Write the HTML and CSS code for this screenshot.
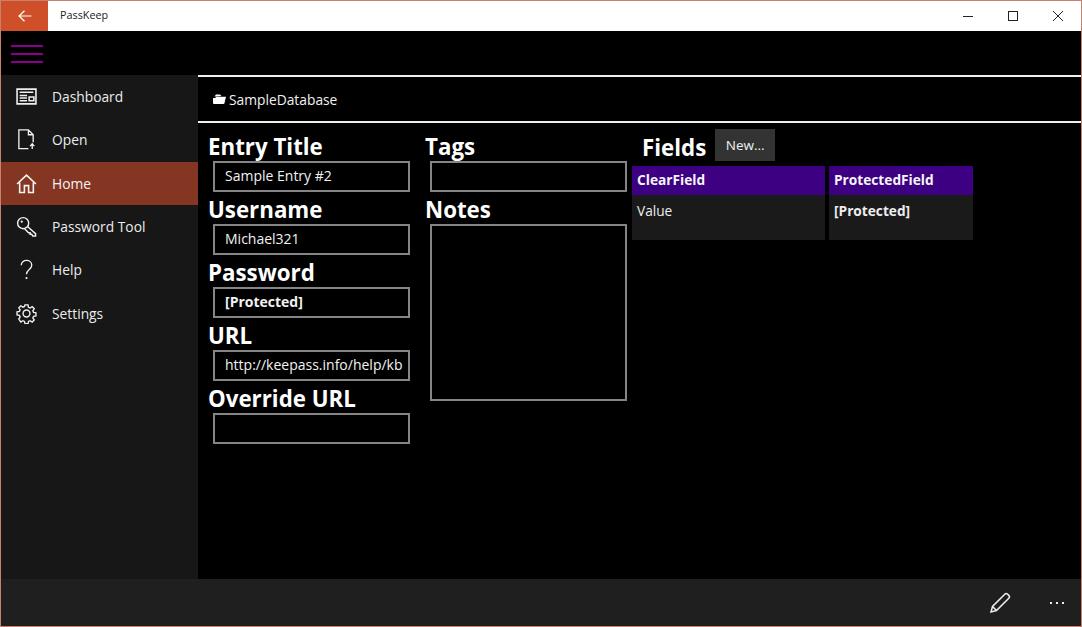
FILE: index.html
```html
<!DOCTYPE html>
<html lang="en">
<head>
<meta charset="utf-8">
<title>PassKeep</title>
<link rel="stylesheet" href="styles.css">
</head>
<body>
<div class="window">
  <header class="titlebar">
    <div class="back"><svg width="14" height="12" viewBox="0 0 14 12"><path d="M6.500.7 1 6l5.500 5.300M1 6h12.500" fill="none" stroke="#fff" stroke-width="1.200"/></svg></div>
    <div class="app-name">PassKeep</div>
    <div class="controls">
      <svg width="12" height="12" viewBox="0 0 12 12"><path d="M1 6.500h10" stroke="#222" stroke-width="1"/></svg>
      <svg width="12" height="12" viewBox="0 0 12 12"><rect x="1.500" y="1.500" width="9" height="9" fill="none" stroke="#222" stroke-width="1"/></svg>
      <svg width="12" height="12" viewBox="0 0 12 12"><path d="M1 1l10 10M11 1 1 11" stroke="#222" stroke-width="1"/></svg>
    </div>
  </header>
  <div class="topbar">
    <div class="hamburger"><span></span><span></span><span></span></div>
  </div>
  <div class="body">
    <nav class="sidebar">
      <div class="nav-item"><svg class="nav-icon" viewBox="0 0 20 20"><path d="M1 3h18v14H1zM3.500 6h13M3.500 9h7M3.500 11.500h7M3.500 14h7M12.500 10.500h4.500v3.500h-4.500z" fill="none" stroke="#f0f0f0" stroke-width="1.500"/></svg><span>Dashboard</span></div>
      <div class="nav-item"><svg class="nav-icon" viewBox="0 0 20 22"><path d="M12 20.500H2V1h10l5 5v8M12 1v5h5M16 21v-5M13.800 18l2.200-2.500 2.200 2.500" fill="none" stroke="#f0f0f0" stroke-width="1.400"/></svg><span>Open</span></div>
      <div class="nav-item active"><svg class="nav-icon" viewBox="0 0 20 20"><path d="M1 10.500 10 2l9 8.500M3.500 9v9.500h4.500v-6.500h4v6.500h4.500V9" fill="none" stroke="#f5f5f5" stroke-width="1.500"/></svg><span>Home</span></div>
      <div class="nav-item"><svg class="nav-icon" viewBox="0 0 22 22"><circle cx="7.500" cy="7.500" r="5.800" fill="none" stroke="#f0f0f0" stroke-width="1.500"/><path d="M12 11l8.500 7.500v2.500h-3l-1-1.800h-1.700v-1.700h-1.700L8.800 13.200" fill="none" stroke="#f0f0f0" stroke-width="1.500"/><circle cx="6" cy="6" r="1.200" fill="#f0f0f0"/></svg><span>Password Tool</span></div>
      <div class="nav-item"><svg class="nav-icon" viewBox="0 0 20 22"><path d="M4.500 6.500C4.500 3.500 7 1.500 10 1.500s5.500 2 5.500 5c0 4.500-5.500 4.500-5.500 9.500" fill="none" stroke="#f0f0f0" stroke-width="1.400"/><circle cx="10" cy="20" r="1.100" fill="#f0f0f0"/></svg><span>Help</span></div>
      <div class="nav-item"><svg class="nav-icon" viewBox="0 0 22 22"><circle cx="11" cy="11" r="3.600" fill="none" stroke="#f0f0f0" stroke-width="1.500"/><path d="M9.200 1h3.600l.5 2.800 1.900.8 2.400-1.600 2.400 2.400-1.600 2.400.8 1.900 2.800.5v3.600l-2.800.5-.8 1.900 1.600 2.400-2.400 2.400-2.400-1.600-1.900.8-.5 2.800H9.200l-.5-2.800-1.900-.8-2.400 1.600L2 17.400l1.600-2.400-.8-1.900-2.800-.5V9l2.800-.5.8-1.900L2 4.400 4.400 2l2.400 1.600 1.900-.8z" transform="translate(1.100 1.100) scale(.9)" fill="none" stroke="#f0f0f0" stroke-width="1.600"/></svg><span>Settings</span></div>
    </nav>
    <main class="main">
      <div class="crumb">
        <svg width="13" height="10" viewBox="0 0 13 10"><path d="M0 4h2L3.500 2.800H13L11.500 9a1 1 0 0 1-1 1H1a1 1 0 0 1-1-1zM1.500 2.500 3 .5h4L8.500 2z" fill="#fff"/></svg>
        <span>SampleDatabase</span>
      </div>
      <div class="detail">
        <section class="col">
          <h2 class="label">Entry Title</h2>
          <div class="input">Sample Entry #2</div>
          <h2 class="label">Username</h2>
          <div class="input">Michael321</div>
          <h2 class="label">Password</h2>
          <div class="input strong">[Protected]</div>
          <h2 class="label">URL</h2>
          <div class="input">http://keepass.info/help/kb</div>
          <h2 class="label">Override URL</h2>
          <div class="input"></div>
        </section>
        <section class="col">
          <h2 class="label">Tags</h2>
          <div class="input"></div>
          <h2 class="label">Notes</h2>
          <div class="input notes"></div>
        </section>
        <section class="fields">
          <div class="fields-head">
            <h2 class="label">Fields</h2>
            <div class="new-btn">New...</div>
          </div>
          <div class="cards">
            <article class="card wide">
              <div class="card-title">ClearField</div>
              <div class="card-value">Value</div>
            </article>
            <article class="card narrow">
              <div class="card-title">ProtectedField</div>
              <div class="card-value strong">[Protected]</div>
            </article>
          </div>
        </section>
      </div>
    </main>
  </div>
  <footer class="appbar">
    <svg class="pencil" width="22" height="22" viewBox="0 0 22 22"><path d="M2 20l1.500-5.500L15.800 2.200a2 2 0 0 1 2.800 0l1.200 1.200a2 2 0 0 1 0 2.800L7.500 18.500zM3.500 14.500l4 4" fill="none" stroke="#eee" stroke-width="1.500"/></svg>
    <div class="more"><i></i><i></i><i></i></div>
  </footer>
</div>
</body>
</html>
```
FILE: styles.css
```css
* { box-sizing: border-box; }
html, body { margin: 0; height: 100%; background: #000; }
body { font-family: "Open Sans", "Noto Sans", sans-serif; color: #f2f2f2; overflow: hidden; }
.window { width: 1082px; height: 627px; display: flex; flex-direction: column; border: 1px solid #c9806e; background: #000; }
.titlebar { height: 30px; flex: none; background: #fff; display: flex; align-items: center; color: #222; }
.back { width: 47px; height: 100%; background: #cf4f29; display: flex; align-items: center; justify-content: center; }
.app-name { margin-left: 12px; font-size: 10.800px; line-height: 28px; height: 30px; }
.controls { margin-left: auto; display: flex; gap: 33px; padding-right: 17px; align-items: center; }
.controls svg { display: block; }
.topbar { height: 44px; flex: none; background: #000; padding: 14px 10px; }
.hamburger { width: 32px; display: flex; flex-direction: column; gap: 6px; }
.hamburger span { height: 2px; background: #8a008a; }
.body { flex: 1; display: flex; min-height: 0; }
.sidebar { width: 197px; flex: none; background: #171717; display: flex; flex-direction: column; }
.nav-item { height: 43.300px; display: flex; align-items: center; padding-left: 15px; gap: 15px; font-size: 13.800px; color: #ececec; }
.nav-item.active { background: #843622; color: #f5f5f5; }
.nav-icon { width: 21px; height: 21px; flex: none; }
.main { flex: 1; display: flex; flex-direction: column; min-width: 0; background: #000; }
.crumb { height: 48px; flex: none; border-top: 2px solid #f0f0f0; border-bottom: 2px solid #f0f0f0; display: flex; align-items: center; gap: 3px; padding-left: 15px; font-size: 13.800px; color: #f2f2f2; }
.crumb span { padding-top: 1px; }
.detail { display: grid; grid-template-columns: 217px 217px 1fr; padding: 6px 0 0 10px; }
.col { min-width: 0; }
.label { margin: 0; height: 32px; line-height: 36px; font-size: 22.300px; font-weight: 700; color: #fff; white-space: nowrap; }
.input { width: 197px; height: 31px; margin-left: 5px; border: 2px solid #858585; padding: 0 10px; line-height: 25px; font-size: 14px; color: #f2f2f2; white-space: nowrap; overflow: hidden; }
.input.notes { height: 177px; }
.strong { font-weight: 700; }
.fields { margin-left: -10px; }
.fields-head { display: flex; align-items: center; gap: 9px; height: 42px; padding-left: 10px; margin-top: -5px; }
.fields-head .label { line-height: 38px; }
.new-btn { width: 60px; height: 32px; background: #333; display: flex; align-items: center; justify-content: center; font-size: 13.500px; color: #f0f0f0; }
.cards { display: flex; gap: 4px; }
.card { height: 74px; background: #1a1a1a; font-size: 13.700px; }
.card.wide { width: 193px; }
.card.narrow { width: 144px; }
.card-title { height: 29px; background: #3e0082; padding-left: 5px; line-height: 28px; font-weight: 700; color: #f5f5f5; }
.card-value { padding: 6px 5px; line-height: 20px; color: #eee; }
.appbar { height: 47px; flex: none; background: #1f1f1f; display: flex; align-items: center; justify-content: flex-end; padding-right: 17px; gap: 39px; }
.pencil { display: block; }
.more { display: flex; gap: 4px; }
.more i { width: 2px; height: 2px; background: #eee; display: block; }
```
